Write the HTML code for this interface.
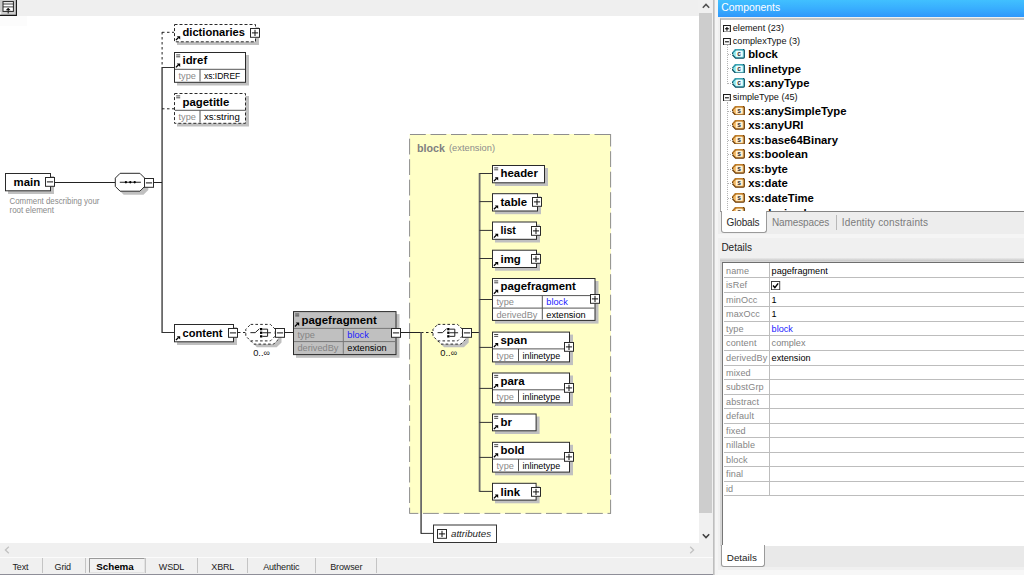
<!DOCTYPE html>
<html><head><meta charset="utf-8"><title>Schema view</title>
<style>
html,body{margin:0;padding:0}
body{width:1024px;height:575px;overflow:hidden;position:relative;background:#f0f0f0;font-family:'Liberation Sans', Arial, sans-serif;font-size:9.2px;color:#000}
div,span,i,svg{position:absolute;box-sizing:border-box}
#top{left:0;top:0;width:698px;height:16px;background:#efefef}
#canvas{left:0;top:16px;width:698.5px;height:527.3px;background:#fff}
#ghost{left:0;top:16px;width:27px;height:9.5px;background:#fcfcfc}
#diagram{left:0;top:0}
#diagram text{font-family:'Liberation Sans', Arial, sans-serif}
#vs{left:698.5px;top:0;width:14.5px;height:543.3px;background:#f0f0f0}
#vthumb{left:.7px;top:13px;width:13.3px;height:500px;background:#cdcdcd}
#hs{left:0;top:543.3px;width:713px;height:14px;background:#f0f0f0}
#hline{left:0;top:557.2px;width:713px;height:1px;background:#fbfbfb}
#btabs{left:0;top:558px;width:713px;height:16px;background:#f0f0f0}
#bline{left:0;top:573.6px;width:714px;height:1.4px;background:#8e8e98}
.btab{top:.5px;height:16px;line-height:16px;text-align:center;font-size:9px;color:#222;white-space:nowrap;letter-spacing:-.15px}
.btab.sel{font-weight:bold;color:#000;letter-spacing:0;font-size:9.8px}
#selbox{left:89px;top:0;width:56px;height:14.6px;border:1px solid #9a9a9a;border-right-color:#e2e2e2;border-bottom-color:#e2e2e2;background:#f2f2f2}
.bsep{top:0;width:1px;height:15px;background:#c4c4c4}
#split1{left:713px;top:0;width:2px;height:575px;background:linear-gradient(90deg,#b4b4b4,#dcdcdc)}
#split2{left:715px;top:0;width:3px;height:575px;background:#f5f5f5}
#rp{left:718px;top:0;width:306px;height:575px;background:#f0f0f0}
#rhead{left:0;top:0;width:306px;height:17px;background:linear-gradient(180deg,#41c0ff 0%,#38aefe 50%,#2f97fb 100%)}
#rhead span{left:3.2px;top:0;line-height:15.6px;color:#fff;font-size:10.4px;white-space:nowrap}
#tree{left:1.6px;top:18.4px;width:306px;height:193.2px;background:#fff;border:1px solid #858585;border-left-color:#a2a2a2;border-top:2px solid #c6c6c6;border-right:0;overflow:hidden}
#treein{left:-720.6px;top:-20.4px;width:1024px;height:400px}
.tl{left:732.8px;font-size:9.12px;line-height:12px;white-space:nowrap;color:#111}
.tn{left:748.2px;font-size:11.3px;line-height:14px;font-weight:bold;white-space:nowrap;color:#000}
.tbi{left:723px}
.tb{display:none}
.ti{left:732.1px}
.dot{left:727.5px;width:5px;height:0;border-top:1px dotted #b4b4b4}
#tdots{left:726.6px;top:45px;width:0;height:38.5px;border-left:1px dotted #b4b4b4}
#tdots2{left:726.6px;top:101.5px;width:0;height:120px;border-left:1px dotted #b4b4b4}
#gtabs{left:0;top:211.6px;width:306px;height:22px}
#gsel{left:3.4px;top:-1px;width:45.6px;height:22px;background:#fff;border:1px solid #9a9a9a;border-top:0;border-radius:0 0 3px 3px}
.gt{top:1.1px;line-height:20px;font-size:10px;white-space:nowrap;color:#7b7b7b}
#gsep{left:117.5px;top:3px;width:1px;height:15px;background:#b8b8b8}
#dsep{left:0;top:233.6px;width:306px;height:4px;background:#f5f5f5}
#gstrip{left:0;top:212.4px;width:306px;height:21.2px;background:#ededed}
#dshade{left:1.6px;top:258.4px;width:305px;height:287.6px;background:linear-gradient(180deg,#e9e9e9 0,#c4c4c4 3.2px,#d6d6d6 3.3px)}
#dlabel{left:3.4px;top:240.6px;line-height:14px;font-size:10px;color:#1c1c1c}
#det{left:3.6px;top:261.5px;width:303px;height:285px;background:#fff;border:1px solid #777;border-right:0;border-top-color:#6e6e6e;border-bottom-color:#9a9a9a;overflow:hidden}
#detin{left:-722.6px;top:-262.5px;width:1024px;height:575px}
.prow{left:724px;width:300px;height:14.5px;border-bottom:1px solid #bdbdbd}
.pk{left:2px;top:0;line-height:14px;color:#858585;font-size:9.1px;white-space:nowrap;letter-spacing:.1px}
.pv{left:47.6px;top:0;line-height:14px;font-size:9.1px;white-space:nowrap}
#pcol{left:769px;top:263px;width:1px;height:232.5px;background:#bdbdbd}
#dtab{left:3.4px;top:545.2px;width:44px;height:21.6px;background:#fff;border:1px solid #9a9a9a;border-top:0;border-radius:0 0 3px 3px}
#dtab span{left:4.4px;top:2.6px;line-height:20px;font-size:9.85px;color:#1c1c1c}
#rbot{left:0;top:570px;width:306px;height:5px;background:#f7f7f7}
#dstrip{left:1.6px;top:546px;width:305px;height:21px;background:#e9e9e9}
</style></head><body>
<div id="top"></div>
<div id="canvas"></div><div id="ghost"></div>
<svg id="diagram" width="698" height="544" viewBox="0 0 698 544" shape-rendering="auto">
<g id="tbicon">
<rect x="0" y="0" width="17" height="16" fill="#cdcdcd"/>
<rect x="0" y="12" width="1.2" height="4" fill="#f4f4f4"/>
<path d="M0 15.4H16.4V0" fill="none" stroke="#161616" stroke-width="1.1"/>
<rect x="3" y="1.6" width="10.4" height="9.8" fill="#fff" stroke="#222" stroke-width="1"/>
<path d="M3 4h10.4M3 6.9h10.4" stroke="#222" stroke-width=".85"/>
<path d="M5.7 10.3L8.2 7.7L10.7 10.3z" fill="#111"/><path d="M8.2 9.5v3.9" stroke="#222" stroke-width="1.1"/>
</g>
<rect x="409.6" y="134" width="201.3" height="379.5" fill="#ffffc6"/>
<line x1="410" y1="134.5" x2="611" y2="134.5" stroke="#8e8e8e" stroke-dasharray="15.8 4.7"/>
<line x1="409.6" y1="134" x2="409.6" y2="513.6" stroke="#8e8e8e" stroke-dasharray="15.8 4.7" stroke-dashoffset="15.8"/>
<line x1="610.6" y1="134" x2="610.6" y2="513.6" stroke="#8e8e8e" stroke-dasharray="15.8 4.7" stroke-dashoffset="3.3"/>
<line x1="409.5" y1="513.4" x2="611" y2="513.4" stroke="#8e8e8e" stroke-dasharray="15.8 4.7" stroke-dashoffset="7"/>
<text x="417" y="151.8" font-size="10.7" fill="#808080" font-weight="bold">block</text>
<text x="449" y="150.8" font-size="9.3" fill="#8c8c8c">(extension)</text>
<line x1="162.1" y1="67" x2="162.1" y2="333.1" stroke="#6a6a6a" stroke-width="1.8"/>
<line x1="162.1" y1="32" x2="162.1" y2="67" stroke="#222" stroke-width="1" stroke-dasharray="2.5 2.5"/>
<line x1="162" y1="32.3" x2="174" y2="32.3" stroke="#222" stroke-width="1" stroke-dasharray="2.5 2.5"/>
<line x1="162" y1="67.5" x2="174" y2="67.5" stroke="#333" stroke-width="1"/>
<line x1="162" y1="108.8" x2="174" y2="108.8" stroke="#222" stroke-width="1" stroke-dasharray="2.5 2.5"/>
<line x1="162" y1="332.5" x2="174" y2="332.5" stroke="#333" stroke-width="1"/>
<rect x="177" y="27" width="82" height="18" fill="#c0c0c0"/>
<rect x="174.5" y="24.5" width="81" height="17.3" fill="#fff" stroke="#2a2a2a" stroke-width="1" stroke-dasharray="3 2"/>
<path d="M175.9 40.1 L178.5 37.5" stroke="#000" stroke-width="1.3" fill="none"/>
<path d="M176.8 36.2 h3.4 v3.4 z" fill="#000"/>
<text x="182.5" y="36" font-size="11.4" fill="#000" font-weight="bold" textLength="62.5" lengthAdjust="spacingAndGlyphs">dictionaries</text>
<rect x="250.5" y="28.5" width="9" height="8.8" fill="#fff" stroke="#2a2a2a" stroke-width="1"/>
<line x1="251.9" y1="32.9" x2="258.1" y2="32.9" stroke="#111" stroke-width="1"/>
<line x1="255" y1="29.8" x2="255" y2="36" stroke="#111" stroke-width="1"/>
<rect x="177" y="55" width="72" height="30.5" fill="#c0c0c0"/>
<rect x="174.5" y="52.5" width="71" height="29.8" fill="#fff" stroke="#2a2a2a" stroke-width="1"/>
<line x1="176.2" y1="54.9" x2="180.2" y2="54.9" stroke="#333" stroke-width="0.9"/>
<line x1="176.2" y1="56.8" x2="180.2" y2="56.8" stroke="#333" stroke-width="0.9"/>
<path d="M175.9 67.4 L178.5 64.8" stroke="#000" stroke-width="1.3" fill="none"/>
<path d="M176.8 63.5 h3.4 v3.4 z" fill="#000"/>
<text x="182.5" y="64.1" font-size="11.4" fill="#000" font-weight="bold">idref</text>
<line x1="175" y1="69.3" x2="245" y2="69.3" stroke="#555" stroke-width="1"/>
<text x="178.5" y="79" font-size="9.2" fill="#8a8a8a">type</text>
<text x="204" y="79" font-size="9.2" fill="#000" textLength="36.3" lengthAdjust="spacingAndGlyphs">xs:IDREF</text>
<line x1="200" y1="69.3" x2="200" y2="81.5" stroke="#555" stroke-width="1"/>
<rect x="177" y="96" width="72" height="30.5" fill="#c0c0c0"/>
<rect x="174.5" y="93.5" width="71" height="29.8" fill="#fff" stroke="#2a2a2a" stroke-width="1" stroke-dasharray="3 2"/>
<line x1="176.2" y1="95.9" x2="180.2" y2="95.9" stroke="#333" stroke-width="0.9"/>
<line x1="176.2" y1="97.8" x2="180.2" y2="97.8" stroke="#333" stroke-width="0.9"/>
<text x="182.5" y="105.5" font-size="11.4" fill="#000" font-weight="bold">pagetitle</text>
<line x1="175" y1="110.3" x2="245" y2="110.3" stroke="#555" stroke-width="1"/>
<text x="178.5" y="120" font-size="9.2" fill="#8a8a8a">type</text>
<text x="204" y="120" font-size="9.2" fill="#000" textLength="35.8" lengthAdjust="spacingAndGlyphs">xs:string</text>
<line x1="200" y1="110.3" x2="200" y2="122.5" stroke="#555" stroke-width="1"/>
<line x1="54" y1="182.5" x2="115" y2="182.5" stroke="#222" stroke-width="1"/>
<rect x="8" y="176" width="46" height="18" fill="#c0c0c0"/>
<rect x="5.5" y="173.5" width="45" height="17.3" fill="#fff" stroke="#2a2a2a" stroke-width="1"/>
<text x="13.5" y="185.9" font-size="11.4" fill="#000" font-weight="bold">main</text>
<rect x="45.5" y="177.5" width="9" height="8.8" fill="#fff" stroke="#2a2a2a" stroke-width="1"/>
<line x1="46.9" y1="181.9" x2="53.1" y2="181.9" stroke="#111" stroke-width="1"/>
<line x1="153" y1="182.5" x2="162" y2="182.5" stroke="#222" stroke-width="1"/>
<polygon points="123.7,176.9 143.5,176.9 148.3,181.7 148.3,190 143.5,194.8 123.7,194.8 118.9,190 118.9,181.7" fill="#c0c0c0"/>
<polygon points="120.1,173.3 139.9,173.3 144.7,178.1 144.7,186.4 139.9,191.2 120.1,191.2 115.3,186.4 115.3,178.1" fill="#fff" stroke="#2a2a2a" stroke-width="1"/>
<line x1="119.8" y1="182.25" x2="140.9" y2="182.25" stroke="#222" stroke-width="1"/>
<circle cx="125.9" cy="182.25" r="1.15" fill="#000"/>
<circle cx="130.3" cy="182.25" r="1.15" fill="#000"/>
<circle cx="134.7" cy="182.25" r="1.15" fill="#000"/>
<rect x="144.5" y="178.5" width="9" height="8.8" fill="#fff" stroke="#2a2a2a" stroke-width="1"/>
<line x1="145.9" y1="182.9" x2="152.1" y2="182.9" stroke="#111" stroke-width="1"/>
<text x="9.5" y="204.3" font-size="8.2" fill="#8a8a8a" textLength="90" lengthAdjust="spacingAndGlyphs">Comment describing your</text>
<text x="9.5" y="213.3" font-size="8.2" fill="#8a8a8a" textLength="44.5" lengthAdjust="spacingAndGlyphs">root element</text>
<rect x="177" y="327" width="60" height="18" fill="#c0c0c0"/>
<rect x="174.5" y="324.5" width="59" height="17.3" fill="#fff" stroke="#2a2a2a" stroke-width="1"/>
<path d="M175.9 340.1 L178.5 337.5" stroke="#000" stroke-width="1.3" fill="none"/>
<path d="M176.8 336.2 h3.4 v3.4 z" fill="#000"/>
<text x="182.5" y="336.7" font-size="11.4" fill="#000" font-weight="bold" textLength="40" lengthAdjust="spacingAndGlyphs">content</text>
<rect x="228.5" y="328.5" width="9" height="8.8" fill="#fff" stroke="#2a2a2a" stroke-width="1"/>
<line x1="229.9" y1="332.9" x2="236.1" y2="332.9" stroke="#111" stroke-width="1"/>
<line x1="238" y1="332.5" x2="246" y2="332.5" stroke="#222" stroke-width="1" stroke-dasharray="2.5 2.5"/>
<polygon points="256.9,330.7 276.7,330.7 281.5,335.5 281.5,342.4 276.7,347.2 256.9,347.2 252.1,342.4 252.1,335.5" fill="#c0c0c0"/>
<polygon points="253.8,327.6 273.6,327.6 278.4,332.4 278.4,339.3 273.6,344.1 253.8,344.1 249,339.3 249,332.4" fill="#fff" stroke="#2a2a2a" stroke-width="1" stroke-dasharray="2.6 2.2"/>
<polygon points="250.6,324.4 270.4,324.4 275.2,329.2 275.2,336.1 270.4,340.9 250.6,340.9 245.8,336.1 245.8,329.2" fill="#fff" stroke="#2a2a2a" stroke-width="1" stroke-dasharray="2.6 2.2"/>
<line x1="250.4" y1="332.65" x2="255.2" y2="332.65" stroke="#222" stroke-width="1"/>
<line x1="255.2" y1="332.65" x2="259.4" y2="328.75" stroke="#222" stroke-width="1"/>
<rect x="260" y="328" width="2.3" height="2.3" fill="#000"/>
<rect x="260" y="331.6" width="2.3" height="2.3" fill="#000"/>
<rect x="260" y="335.2" width="2.3" height="2.3" fill="#000"/>
<path d="M262.3 329.15 h5.3 v7.2 h-5.3 M262.3 332.75 h8.6" fill="none" stroke="#222" stroke-width="1"/>
<rect x="275.5" y="328.5" width="9" height="8.8" fill="#fff" stroke="#2a2a2a" stroke-width="1"/>
<line x1="276.9" y1="332.9" x2="283.1" y2="332.9" stroke="#111" stroke-width="1"/>
<line x1="284.5" y1="332.5" x2="293" y2="332.5" stroke="#222" stroke-width="1"/>
<text x="253.2" y="356.2" font-size="9.4" fill="#111" textLength="17" lengthAdjust="spacingAndGlyphs">0..∞</text>
<line x1="401" y1="332.5" x2="421" y2="332.5" stroke="#222" stroke-width="1"/>
<line x1="421" y1="332.5" x2="433" y2="332.5" stroke="#222" stroke-width="1" stroke-dasharray="2.5 2.5"/>
<rect x="296" y="314.1" width="103.5" height="43.7" fill="#c0c0c0"/>
<rect x="293.5" y="311.6" width="102.5" height="43" fill="#c0c0c0" stroke="#2a2a2a" stroke-width="1"/>
<line x1="295.2" y1="314" x2="299.2" y2="314" stroke="#333" stroke-width="0.9"/>
<line x1="295.2" y1="315.9" x2="299.2" y2="315.9" stroke="#333" stroke-width="0.9"/>
<path d="M294.9 326.5 L297.5 323.9" stroke="#000" stroke-width="1.3" fill="none"/>
<path d="M295.8 322.6 h3.4 v3.4 z" fill="#000"/>
<text x="301.5" y="323.6" font-size="11.4" fill="#000" font-weight="bold">pagefragment</text>
<line x1="294" y1="328.4" x2="395.5" y2="328.4" stroke="#777" stroke-width="1"/>
<text x="297.5" y="338.1" font-size="9.2" fill="#858585">type</text>
<text x="347.3" y="338.1" font-size="9.2" fill="#1a1aff">block</text>
<line x1="294" y1="341.6" x2="395.5" y2="341.6" stroke="#777" stroke-width="1"/>
<text x="297.5" y="351.3" font-size="9.2" fill="#858585">derivedBy</text>
<text x="347.3" y="351.3" font-size="9.2" fill="#000">extension</text>
<line x1="343.3" y1="328.4" x2="343.3" y2="353.8" stroke="#777" stroke-width="1"/>
<rect x="391.5" y="328.5" width="9" height="8.8" fill="#fff" stroke="#2a2a2a" stroke-width="1"/>
<line x1="392.9" y1="332.9" x2="399.1" y2="332.9" stroke="#111" stroke-width="1"/>
<line x1="421.1" y1="332.5" x2="421.1" y2="533.8" stroke="#6a6a6a" stroke-width="1.8"/>
<line x1="421" y1="533.4" x2="433" y2="533.4" stroke="#333" stroke-width="1"/>
<rect x="433.5" y="525" width="63" height="17.5" fill="#fff" stroke="#333" stroke-width="1"/>
<rect x="437.5" y="529.5" width="9" height="8.8" fill="#fff" stroke="#2a2a2a" stroke-width="1"/>
<line x1="438.9" y1="533.9" x2="445.1" y2="533.9" stroke="#111" stroke-width="1"/>
<line x1="442" y1="530.8" x2="442" y2="537" stroke="#111" stroke-width="1"/>
<text x="451" y="536.5" font-size="9.6" fill="#222" font-style="italic" textLength="40" lengthAdjust="spacingAndGlyphs">attributes</text>
<polygon points="444.1,330.7 463.9,330.7 468.7,335.5 468.7,342.4 463.9,347.2 444.1,347.2 439.3,342.4 439.3,335.5" fill="#c0c0c0"/>
<polygon points="441,327.6 460.8,327.6 465.6,332.4 465.6,339.3 460.8,344.1 441,344.1 436.2,339.3 436.2,332.4" fill="#fff" stroke="#2a2a2a" stroke-width="1" stroke-dasharray="2.6 2.2"/>
<polygon points="437.8,324.4 457.6,324.4 462.4,329.2 462.4,336.1 457.6,340.9 437.8,340.9 433,336.1 433,329.2" fill="#fff" stroke="#2a2a2a" stroke-width="1" stroke-dasharray="2.6 2.2"/>
<line x1="437.6" y1="332.65" x2="442.4" y2="332.65" stroke="#222" stroke-width="1"/>
<line x1="442.4" y1="332.65" x2="446.6" y2="328.75" stroke="#222" stroke-width="1"/>
<rect x="447.2" y="328" width="2.3" height="2.3" fill="#000"/>
<rect x="447.2" y="331.6" width="2.3" height="2.3" fill="#000"/>
<rect x="447.2" y="335.2" width="2.3" height="2.3" fill="#000"/>
<path d="M449.5 329.15 h5.3 v7.2 h-5.3 M449.5 332.75 h8.6" fill="none" stroke="#222" stroke-width="1"/>
<rect x="462.5" y="328.5" width="9" height="8.8" fill="#fff" stroke="#2a2a2a" stroke-width="1"/>
<line x1="463.9" y1="332.9" x2="470.1" y2="332.9" stroke="#111" stroke-width="1"/>
<text x="440.3" y="356.2" font-size="9.4" fill="#111" textLength="17" lengthAdjust="spacingAndGlyphs">0..∞</text>
<line x1="471.5" y1="332.5" x2="479.5" y2="332.5" stroke="#222" stroke-width="1"/>
<line x1="479.6" y1="173" x2="479.6" y2="491.8" stroke="#6a6a6a" stroke-width="1.8"/>
<line x1="479.5" y1="173.5" x2="492" y2="173.5" stroke="#333" stroke-width="1"/>
<line x1="479.5" y1="201.6" x2="492" y2="201.6" stroke="#333" stroke-width="1"/>
<line x1="479.5" y1="230.4" x2="492" y2="230.4" stroke="#333" stroke-width="1"/>
<line x1="479.5" y1="258.5" x2="492" y2="258.5" stroke="#333" stroke-width="1"/>
<line x1="479.5" y1="299.5" x2="492" y2="299.5" stroke="#333" stroke-width="1"/>
<line x1="479.5" y1="347.4" x2="492" y2="347.4" stroke="#333" stroke-width="1"/>
<line x1="479.5" y1="388.4" x2="492" y2="388.4" stroke="#333" stroke-width="1"/>
<line x1="479.5" y1="422.4" x2="492" y2="422.4" stroke="#333" stroke-width="1"/>
<line x1="479.5" y1="457.4" x2="492" y2="457.4" stroke="#333" stroke-width="1"/>
<line x1="479.5" y1="491.4" x2="492" y2="491.4" stroke="#333" stroke-width="1"/>
<rect x="495" y="168" width="53" height="18" fill="#c0c0c0"/>
<rect x="492.5" y="165.5" width="52" height="17.3" fill="#fff" stroke="#2a2a2a" stroke-width="1"/>
<line x1="494.2" y1="167.9" x2="498.2" y2="167.9" stroke="#333" stroke-width="0.9"/>
<line x1="494.2" y1="169.8" x2="498.2" y2="169.8" stroke="#333" stroke-width="0.9"/>
<path d="M493.9 181.1 L496.5 178.5" stroke="#000" stroke-width="1.3" fill="none"/>
<path d="M494.8 177.2 h3.4 v3.4 z" fill="#000"/>
<text x="500.5" y="177.3" font-size="11.4" fill="#000" font-weight="bold">header</text>
<rect x="495" y="196.2" width="46" height="18" fill="#c0c0c0"/>
<rect x="492.5" y="193.7" width="45" height="17.3" fill="#fff" stroke="#2a2a2a" stroke-width="1"/>
<path d="M493.9 209.3 L496.5 206.7" stroke="#000" stroke-width="1.3" fill="none"/>
<path d="M494.8 205.4 h3.4 v3.4 z" fill="#000"/>
<text x="500.5" y="206" font-size="11.4" fill="#000" font-weight="bold">table</text>
<rect x="532.5" y="197.5" width="9" height="8.8" fill="#fff" stroke="#2a2a2a" stroke-width="1"/>
<line x1="533.9" y1="201.9" x2="540.1" y2="201.9" stroke="#111" stroke-width="1"/>
<line x1="537" y1="198.8" x2="537" y2="205" stroke="#111" stroke-width="1"/>
<rect x="495" y="224.5" width="45" height="18" fill="#c0c0c0"/>
<rect x="492.5" y="222" width="44" height="17.3" fill="#fff" stroke="#2a2a2a" stroke-width="1"/>
<path d="M493.9 237.6 L496.5 235" stroke="#000" stroke-width="1.3" fill="none"/>
<path d="M494.8 233.7 h3.4 v3.4 z" fill="#000"/>
<text x="500.5" y="233.8" font-size="11.4" fill="#000" font-weight="bold" textLength="15.3" lengthAdjust="spacingAndGlyphs">list</text>
<rect x="531.5" y="226.5" width="9" height="8.8" fill="#fff" stroke="#2a2a2a" stroke-width="1"/>
<line x1="532.9" y1="230.9" x2="539.1" y2="230.9" stroke="#111" stroke-width="1"/>
<line x1="536" y1="227.8" x2="536" y2="234" stroke="#111" stroke-width="1"/>
<rect x="495" y="252.7" width="45" height="18" fill="#c0c0c0"/>
<rect x="492.5" y="250.2" width="44" height="17.3" fill="#fff" stroke="#2a2a2a" stroke-width="1"/>
<path d="M493.9 265.8 L496.5 263.2" stroke="#000" stroke-width="1.3" fill="none"/>
<path d="M494.8 261.9 h3.4 v3.4 z" fill="#000"/>
<text x="500.5" y="262.6" font-size="11.4" fill="#000" font-weight="bold">img</text>
<rect x="531.5" y="254.5" width="9" height="8.8" fill="#fff" stroke="#2a2a2a" stroke-width="1"/>
<line x1="532.9" y1="258.9" x2="539.1" y2="258.9" stroke="#111" stroke-width="1"/>
<line x1="536" y1="255.8" x2="536" y2="262" stroke="#111" stroke-width="1"/>
<rect x="495" y="281" width="103.5" height="42.6" fill="#c0c0c0"/>
<rect x="492.5" y="278.5" width="102.5" height="41.9" fill="#fff" stroke="#2a2a2a" stroke-width="1"/>
<line x1="494.2" y1="280.9" x2="498.2" y2="280.9" stroke="#333" stroke-width="0.9"/>
<line x1="494.2" y1="282.8" x2="498.2" y2="282.8" stroke="#333" stroke-width="0.9"/>
<path d="M493.9 293.7 L496.5 291.1" stroke="#000" stroke-width="1.3" fill="none"/>
<path d="M494.8 289.8 h3.4 v3.4 z" fill="#000"/>
<text x="500.5" y="290.3" font-size="11.4" fill="#000" font-weight="bold">pagefragment</text>
<line x1="493" y1="295.6" x2="594.5" y2="295.6" stroke="#555" stroke-width="1"/>
<text x="496.5" y="305.3" font-size="9.2" fill="#8a8a8a">type</text>
<text x="546.3" y="305.3" font-size="9.2" fill="#1a1aff">block</text>
<line x1="493" y1="308.1" x2="594.5" y2="308.1" stroke="#555" stroke-width="1"/>
<text x="496.5" y="317.8" font-size="9.2" fill="#8a8a8a">derivedBy</text>
<text x="546.3" y="317.8" font-size="9.2" fill="#000">extension</text>
<line x1="542.3" y1="295.6" x2="542.3" y2="319.6" stroke="#555" stroke-width="1"/>
<rect x="590.5" y="294.5" width="9" height="8.8" fill="#fff" stroke="#2a2a2a" stroke-width="1"/>
<line x1="591.9" y1="298.9" x2="598.1" y2="298.9" stroke="#111" stroke-width="1"/>
<line x1="595" y1="295.8" x2="595" y2="302" stroke="#111" stroke-width="1"/>
<rect x="495" y="334.6" width="78" height="30.5" fill="#c0c0c0"/>
<rect x="492.5" y="332.1" width="77" height="29.8" fill="#fff" stroke="#2a2a2a" stroke-width="1"/>
<line x1="494.2" y1="334.5" x2="498.2" y2="334.5" stroke="#333" stroke-width="0.9"/>
<line x1="494.2" y1="336.4" x2="498.2" y2="336.4" stroke="#333" stroke-width="0.9"/>
<path d="M493.9 347 L496.5 344.4" stroke="#000" stroke-width="1.3" fill="none"/>
<path d="M494.8 343.1 h3.4 v3.4 z" fill="#000"/>
<text x="500.5" y="344" font-size="11.4" fill="#000" font-weight="bold">span</text>
<line x1="493" y1="348.9" x2="569" y2="348.9" stroke="#555" stroke-width="1"/>
<text x="496.5" y="358.6" font-size="9.2" fill="#8a8a8a">type</text>
<text x="522.5" y="358.6" font-size="9.2" fill="#000" textLength="37.7" lengthAdjust="spacingAndGlyphs">inlinetype</text>
<line x1="518.5" y1="348.9" x2="518.5" y2="361.1" stroke="#555" stroke-width="1"/>
<rect x="564.5" y="342.5" width="9" height="8.8" fill="#fff" stroke="#2a2a2a" stroke-width="1"/>
<line x1="565.9" y1="346.9" x2="572.1" y2="346.9" stroke="#111" stroke-width="1"/>
<line x1="569" y1="343.8" x2="569" y2="350" stroke="#111" stroke-width="1"/>
<rect x="495" y="375.5" width="78" height="30.5" fill="#c0c0c0"/>
<rect x="492.5" y="373" width="77" height="29.8" fill="#fff" stroke="#2a2a2a" stroke-width="1"/>
<line x1="494.2" y1="375.4" x2="498.2" y2="375.4" stroke="#333" stroke-width="0.9"/>
<line x1="494.2" y1="377.3" x2="498.2" y2="377.3" stroke="#333" stroke-width="0.9"/>
<path d="M493.9 387.9 L496.5 385.3" stroke="#000" stroke-width="1.3" fill="none"/>
<path d="M494.8 384 h3.4 v3.4 z" fill="#000"/>
<text x="500.5" y="385.4" font-size="11.4" fill="#000" font-weight="bold">para</text>
<line x1="493" y1="389.8" x2="569" y2="389.8" stroke="#555" stroke-width="1"/>
<text x="496.5" y="399.5" font-size="9.2" fill="#8a8a8a">type</text>
<text x="522.5" y="399.5" font-size="9.2" fill="#000" textLength="37.7" lengthAdjust="spacingAndGlyphs">inlinetype</text>
<line x1="518.5" y1="389.8" x2="518.5" y2="402" stroke="#555" stroke-width="1"/>
<rect x="564.5" y="383.5" width="9" height="8.8" fill="#fff" stroke="#2a2a2a" stroke-width="1"/>
<line x1="565.9" y1="387.9" x2="572.1" y2="387.9" stroke="#111" stroke-width="1"/>
<line x1="569" y1="384.8" x2="569" y2="391" stroke="#111" stroke-width="1"/>
<rect x="495" y="416.5" width="44.6" height="17.5" fill="#c0c0c0"/>
<rect x="492.5" y="414" width="43.6" height="16.8" fill="#fff" stroke="#2a2a2a" stroke-width="1"/>
<line x1="494.2" y1="416.4" x2="498.2" y2="416.4" stroke="#333" stroke-width="0.9"/>
<line x1="494.2" y1="418.3" x2="498.2" y2="418.3" stroke="#333" stroke-width="0.9"/>
<path d="M493.9 429.1 L496.5 426.5" stroke="#000" stroke-width="1.3" fill="none"/>
<path d="M494.8 425.2 h3.4 v3.4 z" fill="#000"/>
<text x="500.5" y="426" font-size="11.4" fill="#000" font-weight="bold">br</text>
<rect x="495" y="444.8" width="78" height="30.5" fill="#c0c0c0"/>
<rect x="492.5" y="442.3" width="77" height="29.8" fill="#fff" stroke="#2a2a2a" stroke-width="1"/>
<line x1="494.2" y1="444.7" x2="498.2" y2="444.7" stroke="#333" stroke-width="0.9"/>
<line x1="494.2" y1="446.6" x2="498.2" y2="446.6" stroke="#333" stroke-width="0.9"/>
<path d="M493.9 457.2 L496.5 454.6" stroke="#000" stroke-width="1.3" fill="none"/>
<path d="M494.8 453.3 h3.4 v3.4 z" fill="#000"/>
<text x="500.5" y="454.2" font-size="11.4" fill="#000" font-weight="bold">bold</text>
<line x1="493" y1="459.1" x2="569" y2="459.1" stroke="#555" stroke-width="1"/>
<text x="496.5" y="468.8" font-size="9.2" fill="#8a8a8a">type</text>
<text x="522.5" y="468.8" font-size="9.2" fill="#000" textLength="37.7" lengthAdjust="spacingAndGlyphs">inlinetype</text>
<line x1="518.5" y1="459.1" x2="518.5" y2="471.3" stroke="#555" stroke-width="1"/>
<rect x="564.5" y="452.5" width="9" height="8.8" fill="#fff" stroke="#2a2a2a" stroke-width="1"/>
<line x1="565.9" y1="456.9" x2="572.1" y2="456.9" stroke="#111" stroke-width="1"/>
<line x1="569" y1="453.8" x2="569" y2="460" stroke="#111" stroke-width="1"/>
<rect x="495" y="485.8" width="44.6" height="17.5" fill="#c0c0c0"/>
<rect x="492.5" y="483.3" width="43.6" height="16.8" fill="#fff" stroke="#2a2a2a" stroke-width="1"/>
<path d="M493.9 498.4 L496.5 495.8" stroke="#000" stroke-width="1.3" fill="none"/>
<path d="M494.8 494.5 h3.4 v3.4 z" fill="#000"/>
<text x="500.5" y="495.5" font-size="11.4" fill="#000" font-weight="bold">link</text>
<rect x="531.5" y="487.5" width="9" height="8.8" fill="#fff" stroke="#2a2a2a" stroke-width="1"/>
<line x1="532.9" y1="491.9" x2="539.1" y2="491.9" stroke="#111" stroke-width="1"/>
<line x1="536" y1="488.8" x2="536" y2="495" stroke="#111" stroke-width="1"/>
</svg>
<div id="vs"><div id="vthumb"></div>
<svg style="left:3.6px;top:3.4px" width="8" height="6" viewBox="0 0 8 6"><path d="M.8 4.8L4 1.4L7.2 4.8" fill="none" stroke="#505050" stroke-width="1.5"/></svg>
<svg style="left:3.6px;top:532.6px" width="8" height="6" viewBox="0 0 8 6"><path d="M.8 1.2L4 4.6L7.2 1.2" fill="none" stroke="#404040" stroke-width="1.5"/></svg>
</div>
<div id="hs">
<svg style="left:4px;top:2.6px" width="6" height="8" viewBox="0 0 6 8"><path d="M4.8 .8L1.4 4L4.8 7.2" fill="none" stroke="#c2c2c2" stroke-width="1.3"/></svg>
<svg style="left:688.6px;top:2.6px" width="6" height="8" viewBox="0 0 6 8"><path d="M1.2 .8L4.6 4L1.2 7.2" fill="none" stroke="#c2c2c2" stroke-width="1.3"/></svg>
</div>
<div id="hline"></div>
<div id="btabs"><div id="selbox"></div>
<span class="btab" style="left:2px;width:36.8px">Text</span>
<span class="btab" style="left:44.5px;width:36.5px">Grid</span>
<span class="btab sel" style="left:86px;width:58px">Schema</span>
<span class="btab" style="left:148px;width:47px">WSDL</span>
<span class="btab" style="left:201px;width:43.5px">XBRL</span>
<span class="btab" style="left:252.5px;width:57.5px">Authentic</span>
<span class="btab" style="left:320.5px;width:51.5px">Browser</span>
<i class="bsep" style="left:42px"></i>
<i class="bsep" style="left:84.5px"></i>
<i class="bsep" style="left:145px"></i>
<i class="bsep" style="left:197px"></i>
<i class="bsep" style="left:247px"></i>
<i class="bsep" style="left:315px"></i>
<i class="bsep" style="left:375.5px"></i>
</div>
<div id="bline"></div>
<div id="split1"></div><div id="split2"></div>
<div id="rp">
<div id="rhead"><span>Components</span></div>
<div id="tree"><div id="treein">
<div id="tdots"></div><div id="tdots2"></div>
<svg class="tbi" style="top:24.6px" width="7.9" height="7.6" viewBox="0 0 9 9" preserveAspectRatio="none"><rect x=".6" y=".6" width="7.8" height="7.8" fill="#fff" stroke="#1c1c1c" stroke-width="1.2"/><path d="M2.3 4.5h4.4M4.5 2.3v4.4" stroke="#000" stroke-width="1.25" fill="none"/></svg>
<div class="tl" style="top:22px">element (23)</div>
<svg class="tbi" style="top:37.6px" width="7.9" height="7.6" viewBox="0 0 9 9" preserveAspectRatio="none"><rect x=".6" y=".6" width="7.8" height="7.8" fill="#fff" stroke="#1c1c1c" stroke-width="1.2"/><path d="M2.3 4.5h4.4" stroke="#000" stroke-width="1.25" fill="none"/></svg>
<div class="tl" style="top:35px">complexType (3)</div>
<svg class="ti" style="top:49px" width="12.8" height="9.8" viewBox="0 0 13 10" preserveAspectRatio="none"><path d="M3.6 .6h8a.9 .9 0 0 1 .9 .9v7a.9 .9 0 0 1 -.9 .9h-8l-3-3.4v-2z" fill="#8fe9ee" stroke="#0d4f63" stroke-width="1.25"/><path d="M.7 3.9l2.9-3.3h7.6" fill="none" stroke="#3aa3b3" stroke-width="1.25"/><rect x="3.9" y="1.9" width="6.9" height="6.1" rx="1.2" fill="#effeff"/><text x="7.3" y="7.3" font-size="6.8" font-weight="bold" text-anchor="middle" fill="#333" font-family="Liberation Sans, Arial, sans-serif">c</text></svg>
<div class="tn" style="top:47.2px">block</div>
<div class="dot" style="top:53.9px"></div>
<svg class="ti" style="top:63.5px" width="12.8" height="9.8" viewBox="0 0 13 10" preserveAspectRatio="none"><path d="M3.6 .6h8a.9 .9 0 0 1 .9 .9v7a.9 .9 0 0 1 -.9 .9h-8l-3-3.4v-2z" fill="#8fe9ee" stroke="#0d4f63" stroke-width="1.25"/><path d="M.7 3.9l2.9-3.3h7.6" fill="none" stroke="#3aa3b3" stroke-width="1.25"/><rect x="3.9" y="1.9" width="6.9" height="6.1" rx="1.2" fill="#effeff"/><text x="7.3" y="7.3" font-size="6.8" font-weight="bold" text-anchor="middle" fill="#333" font-family="Liberation Sans, Arial, sans-serif">c</text></svg>
<div class="tn" style="top:61.7px">inlinetype</div>
<div class="dot" style="top:68.4px"></div>
<svg class="ti" style="top:78.2px" width="12.8" height="9.8" viewBox="0 0 13 10" preserveAspectRatio="none"><path d="M3.6 .6h8a.9 .9 0 0 1 .9 .9v7a.9 .9 0 0 1 -.9 .9h-8l-3-3.4v-2z" fill="#8fe9ee" stroke="#0d4f63" stroke-width="1.25"/><path d="M.7 3.9l2.9-3.3h7.6" fill="none" stroke="#3aa3b3" stroke-width="1.25"/><rect x="3.9" y="1.9" width="6.9" height="6.1" rx="1.2" fill="#effeff"/><text x="7.3" y="7.3" font-size="6.8" font-weight="bold" text-anchor="middle" fill="#333" font-family="Liberation Sans, Arial, sans-serif">c</text></svg>
<div class="tn" style="top:76.4px">xs:anyType</div>
<div class="dot" style="top:83.1px"></div>
<svg class="tbi" style="top:93.9px" width="7.9" height="7.6" viewBox="0 0 9 9" preserveAspectRatio="none"><rect x=".6" y=".6" width="7.8" height="7.8" fill="#fff" stroke="#1c1c1c" stroke-width="1.2"/><path d="M2.3 4.5h4.4" stroke="#000" stroke-width="1.25" fill="none"/></svg>
<div class="tl" style="top:91.3px">simpleType (45)</div>
<svg class="ti" style="top:105.6px" width="12.8" height="9.8" viewBox="0 0 13 10" preserveAspectRatio="none"><path d="M3.6 .6h8a.9 .9 0 0 1 .9 .9v7a.9 .9 0 0 1 -.9 .9h-8l-3-3.4v-2z" fill="#f3b862" stroke="#6b3d0c" stroke-width="1.25"/><path d="M.7 3.9l2.9-3.3h7.6" fill="none" stroke="#c07f2c" stroke-width="1.25"/><rect x="3.9" y="1.9" width="6.9" height="6.1" rx="1.2" fill="#fff3d8"/><text x="7.3" y="7.3" font-size="6.8" font-weight="bold" text-anchor="middle" fill="#333" font-family="Liberation Sans, Arial, sans-serif">s</text></svg>
<div class="tn" style="top:103.8px">xs:anySimpleType</div>
<div class="dot" style="top:110.5px"></div>
<svg class="ti" style="top:120.13px" width="12.8" height="9.8" viewBox="0 0 13 10" preserveAspectRatio="none"><path d="M3.6 .6h8a.9 .9 0 0 1 .9 .9v7a.9 .9 0 0 1 -.9 .9h-8l-3-3.4v-2z" fill="#f3b862" stroke="#6b3d0c" stroke-width="1.25"/><path d="M.7 3.9l2.9-3.3h7.6" fill="none" stroke="#c07f2c" stroke-width="1.25"/><rect x="3.9" y="1.9" width="6.9" height="6.1" rx="1.2" fill="#fff3d8"/><text x="7.3" y="7.3" font-size="6.8" font-weight="bold" text-anchor="middle" fill="#333" font-family="Liberation Sans, Arial, sans-serif">s</text></svg>
<div class="tn" style="top:118.33px">xs:anyURI</div>
<div class="dot" style="top:125.03px"></div>
<svg class="ti" style="top:134.66px" width="12.8" height="9.8" viewBox="0 0 13 10" preserveAspectRatio="none"><path d="M3.6 .6h8a.9 .9 0 0 1 .9 .9v7a.9 .9 0 0 1 -.9 .9h-8l-3-3.4v-2z" fill="#f3b862" stroke="#6b3d0c" stroke-width="1.25"/><path d="M.7 3.9l2.9-3.3h7.6" fill="none" stroke="#c07f2c" stroke-width="1.25"/><rect x="3.9" y="1.9" width="6.9" height="6.1" rx="1.2" fill="#fff3d8"/><text x="7.3" y="7.3" font-size="6.8" font-weight="bold" text-anchor="middle" fill="#333" font-family="Liberation Sans, Arial, sans-serif">s</text></svg>
<div class="tn" style="top:132.86px">xs:base64Binary</div>
<div class="dot" style="top:139.56px"></div>
<svg class="ti" style="top:149.19px" width="12.8" height="9.8" viewBox="0 0 13 10" preserveAspectRatio="none"><path d="M3.6 .6h8a.9 .9 0 0 1 .9 .9v7a.9 .9 0 0 1 -.9 .9h-8l-3-3.4v-2z" fill="#f3b862" stroke="#6b3d0c" stroke-width="1.25"/><path d="M.7 3.9l2.9-3.3h7.6" fill="none" stroke="#c07f2c" stroke-width="1.25"/><rect x="3.9" y="1.9" width="6.9" height="6.1" rx="1.2" fill="#fff3d8"/><text x="7.3" y="7.3" font-size="6.8" font-weight="bold" text-anchor="middle" fill="#333" font-family="Liberation Sans, Arial, sans-serif">s</text></svg>
<div class="tn" style="top:147.39px">xs:boolean</div>
<div class="dot" style="top:154.09px"></div>
<svg class="ti" style="top:163.72px" width="12.8" height="9.8" viewBox="0 0 13 10" preserveAspectRatio="none"><path d="M3.6 .6h8a.9 .9 0 0 1 .9 .9v7a.9 .9 0 0 1 -.9 .9h-8l-3-3.4v-2z" fill="#f3b862" stroke="#6b3d0c" stroke-width="1.25"/><path d="M.7 3.9l2.9-3.3h7.6" fill="none" stroke="#c07f2c" stroke-width="1.25"/><rect x="3.9" y="1.9" width="6.9" height="6.1" rx="1.2" fill="#fff3d8"/><text x="7.3" y="7.3" font-size="6.8" font-weight="bold" text-anchor="middle" fill="#333" font-family="Liberation Sans, Arial, sans-serif">s</text></svg>
<div class="tn" style="top:161.92px">xs:byte</div>
<div class="dot" style="top:168.62px"></div>
<svg class="ti" style="top:178.25px" width="12.8" height="9.8" viewBox="0 0 13 10" preserveAspectRatio="none"><path d="M3.6 .6h8a.9 .9 0 0 1 .9 .9v7a.9 .9 0 0 1 -.9 .9h-8l-3-3.4v-2z" fill="#f3b862" stroke="#6b3d0c" stroke-width="1.25"/><path d="M.7 3.9l2.9-3.3h7.6" fill="none" stroke="#c07f2c" stroke-width="1.25"/><rect x="3.9" y="1.9" width="6.9" height="6.1" rx="1.2" fill="#fff3d8"/><text x="7.3" y="7.3" font-size="6.8" font-weight="bold" text-anchor="middle" fill="#333" font-family="Liberation Sans, Arial, sans-serif">s</text></svg>
<div class="tn" style="top:176.45px">xs:date</div>
<div class="dot" style="top:183.15px"></div>
<svg class="ti" style="top:192.78px" width="12.8" height="9.8" viewBox="0 0 13 10" preserveAspectRatio="none"><path d="M3.6 .6h8a.9 .9 0 0 1 .9 .9v7a.9 .9 0 0 1 -.9 .9h-8l-3-3.4v-2z" fill="#f3b862" stroke="#6b3d0c" stroke-width="1.25"/><path d="M.7 3.9l2.9-3.3h7.6" fill="none" stroke="#c07f2c" stroke-width="1.25"/><rect x="3.9" y="1.9" width="6.9" height="6.1" rx="1.2" fill="#fff3d8"/><text x="7.3" y="7.3" font-size="6.8" font-weight="bold" text-anchor="middle" fill="#333" font-family="Liberation Sans, Arial, sans-serif">s</text></svg>
<div class="tn" style="top:190.98px">xs:dateTime</div>
<div class="dot" style="top:197.68px"></div>
<svg class="ti" style="top:207.31px" width="12.8" height="9.8" viewBox="0 0 13 10" preserveAspectRatio="none"><path d="M3.6 .6h8a.9 .9 0 0 1 .9 .9v7a.9 .9 0 0 1 -.9 .9h-8l-3-3.4v-2z" fill="#f3b862" stroke="#6b3d0c" stroke-width="1.25"/><path d="M.7 3.9l2.9-3.3h7.6" fill="none" stroke="#c07f2c" stroke-width="1.25"/><rect x="3.9" y="1.9" width="6.9" height="6.1" rx="1.2" fill="#fff3d8"/><text x="7.3" y="7.3" font-size="6.8" font-weight="bold" text-anchor="middle" fill="#333" font-family="Liberation Sans, Arial, sans-serif">s</text></svg>
<div class="tn" style="top:205.51px">xs:decimal</div>
<div class="dot" style="top:212.21px"></div>
</div></div>
<div id="gstrip"></div><div id="dshade"></div>
<div id="gtabs"><div id="gsel"></div>
<span class="gt" style="left:8.5px;color:#2a2a2a;letter-spacing:-.14px">Globals</span>
<span class="gt" style="left:54px;letter-spacing:-.13px">Namespaces</span>
<i id="gsep"></i>
<span class="gt" style="left:123.8px;letter-spacing:.15px">Identity constraints</span>
</div>
<div id="dsep"></div>
<div id="dlabel">Details</div>
<div id="det"><div id="detin">
<div class="prow" style="top:263.7px"><span class="pk">name</span><span class="pv" style="color:#000">pagefragment</span></div>
<div class="prow" style="top:278.25px"><span class="pk">isRef</span><svg style="position:absolute;left:47.4px;top:2.8px" width="9.2" height="9.2" viewBox="0 0 10 10"><rect x=".5" y=".5" width="9" height="9" fill="#fff" stroke="#333"/><path d="M2.2 5l2 2.2l3.6-4.6" fill="none" stroke="#000" stroke-width="1.6"/></svg></div>
<div class="prow" style="top:292.8px"><span class="pk">minOcc</span><span class="pv" style="color:#000">1</span></div>
<div class="prow" style="top:307.35px"><span class="pk">maxOcc</span><span class="pv" style="color:#000">1</span></div>
<div class="prow" style="top:321.9px"><span class="pk">type</span><span class="pv" style="color:#1a1aff">block</span></div>
<div class="prow" style="top:336.45px"><span class="pk">content</span><span class="pv" style="color:#808080">complex</span></div>
<div class="prow" style="top:351px"><span class="pk">derivedBy</span><span class="pv" style="color:#000">extension</span></div>
<div class="prow" style="top:365.55px"><span class="pk">mixed</span><span class="pv" style="color:#000"></span></div>
<div class="prow" style="top:380.1px"><span class="pk">substGrp</span><span class="pv" style="color:#000"></span></div>
<div class="prow" style="top:394.65px"><span class="pk">abstract</span><span class="pv" style="color:#000"></span></div>
<div class="prow" style="top:409.2px"><span class="pk">default</span><span class="pv" style="color:#000"></span></div>
<div class="prow" style="top:423.75px"><span class="pk">fixed</span><span class="pv" style="color:#000"></span></div>
<div class="prow" style="top:438.3px"><span class="pk">nillable</span><span class="pv" style="color:#000"></span></div>
<div class="prow" style="top:452.85px"><span class="pk">block</span><span class="pv" style="color:#000"></span></div>
<div class="prow" style="top:467.4px"><span class="pk">final</span><span class="pv" style="color:#000"></span></div>
<div class="prow" style="top:481.95px"><span class="pk">id</span><span class="pv" style="color:#000"></span></div>
<div id="pcol"></div>
</div></div>
<div id="dstrip"></div>
<div id="dtab"><span>Details</span></div>
<div id="rbot"></div>
</div>
</body></html>
